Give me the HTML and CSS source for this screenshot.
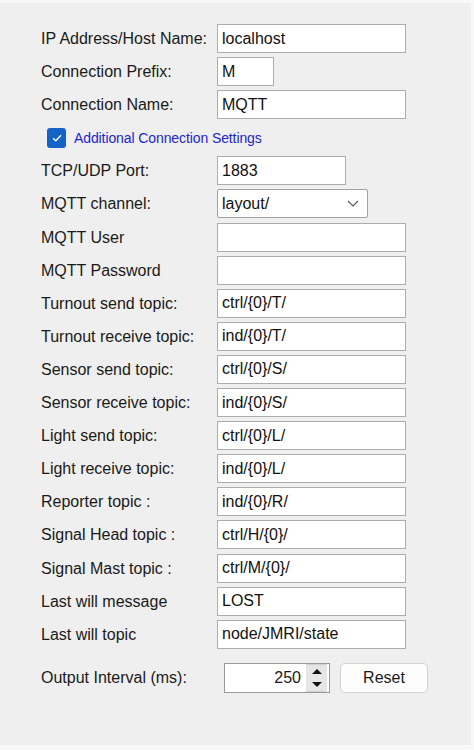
FILE: index.html
```html
<!DOCTYPE html>
<html lang="en">
<head>
  <meta charset="UTF-8">
  <title>MQTT Connection</title>
  <link rel="stylesheet" href="styles.css">
</head>
<body>
  <div class="panel">
    <div class="form-grid">
      <label>IP Address/Host Name:</label>
      <div class="field wide">localhost</div>
      <label>Connection Prefix:</label>
      <div class="field tiny">M</div>
      <label>Connection Name:</label>
      <div class="field wide">MQTT</div>

      <div class="check-row">
        <span class="checkbox">
          <svg width="10" height="8" viewBox="0 0 10 8"><path d="M1 4.2 L3.8 6.8 L9 1.2" fill="none" stroke="#fff" stroke-width="1.4"/></svg>
        </span>
        <span class="check-label">Additional Connection Settings</span>
      </div>

      <label>TCP/UDP Port:</label>
      <div class="field medium">1883</div>
      <label>MQTT channel:</label>
      <div class="field combo">
        <span>layout/</span>
        <svg width="12" height="7" viewBox="0 0 12 7"><path d="M1 1 L6 6 L11 1" fill="none" stroke="#555" stroke-width="1.1"/></svg>
      </div>
      <label>MQTT User</label>
      <div class="field wide"></div>
      <label>MQTT Password</label>
      <div class="field wide"></div>
      <label>Turnout send topic:</label>
      <div class="field wide">ctrl/{0}/T/</div>
      <label>Turnout receive topic:</label>
      <div class="field wide">ind/{0}/T/</div>
      <label>Sensor send topic:</label>
      <div class="field wide">ctrl/{0}/S/</div>
      <label>Sensor receive topic:</label>
      <div class="field wide">ind/{0}/S/</div>
      <label>Light send topic:</label>
      <div class="field wide">ctrl/{0}/L/</div>
      <label>Light receive topic:</label>
      <div class="field wide">ind/{0}/L/</div>
      <label>Reporter topic :</label>
      <div class="field wide">ind/{0}/R/</div>
      <label>Signal Head topic :</label>
      <div class="field wide">ctrl/H/{0}/</div>
      <label>Signal Mast topic :</label>
      <div class="field wide">ctrl/M/{0}/</div>
      <label>Last will message</label>
      <div class="field wide">LOST</div>
      <label>Last will topic</label>
      <div class="field wide">node/JMRI/state</div>
    </div>

    <div class="interval-row">
      <label>Output Interval (ms):</label>
      <div class="spinner">
        <span class="spin-value">250</span>
        <span class="spin-btns">
          <span class="spin-up"></span>
          <span class="spin-down"></span>
        </span>
      </div>
      <button class="reset-btn">Reset</button>
    </div>
  </div>
</body>
</html>
```

FILE: styles.css
```css
body {
  margin: 0;
  background-color: #f8f8f8;
  font-family: "Liberation Sans", Arial, sans-serif;
  font-size: 16px;
  color: #1a1a1a;
}
.panel {
  background-color: #efefef;
  height: 742px;
  margin: 3px 3px 0 0;
  padding: 21px 0 0 41px;
  box-sizing: border-box;
}
.form-grid {
  display: grid;
  grid-template-columns: 176px auto;
  grid-auto-rows: 29px;
  row-gap: 4.1px;
  align-items: center;
}
.form-grid label,
.interval-row label {
  white-space: nowrap;
  padding-top: 1px;
}
.field {
  height: 29px;
  box-sizing: border-box;
  background: #fff;
  border: 1px solid #adadad;
  padding: 0 4px;
  display: flex;
  align-items: center;
  color: #111;
}
.wide { width: 189px; }
.tiny { width: 57px; }
.medium { width: 129px; }
.combo {
  width: 151px;
  border-radius: 2px;
  border-color: #a2a2a2;
  justify-content: space-between;
  padding-right: 8px;
}
.check-row {
  grid-column: 1 / 3;
  display: flex;
  align-items: center;
  padding-left: 6px;
}
.checkbox {
  width: 19px;
  height: 20px;
  border-radius: 3px;
  background-color: #1463c6;
  display: flex;
  align-items: center;
  justify-content: center;
  margin-right: 8px;
}
.check-label {
  font-size: 14px;
  letter-spacing: -0.1px;
  color: #2323d6;
}
.interval-row {
  display: flex;
  align-items: center;
  margin-top: 14px;
}
.interval-row label {
  width: 183px;
}
.spinner {
  width: 106px;
  height: 30px;
  box-sizing: border-box;
  border: 1px solid #9a9a9a;
  background: #fff;
  display: flex;
  align-items: center;
}
.spin-value {
  flex: 1;
  text-align: right;
  padding-right: 5px;
}
.spin-btns {
  width: 21px;
  height: 26px;
  margin-right: 2px;
  background: #e6e6e6;
  display: flex;
  flex-direction: column;
  align-items: center;
  justify-content: space-around;
  border-top: 1px solid #d0d0d0;
  border-bottom: 1px solid #d0d0d0;
}
.spin-up,
.spin-down {
  width: 0;
  height: 0;
  border-left: 5px solid transparent;
  border-right: 5px solid transparent;
}
.spin-up { border-bottom: 5px solid #111; }
.spin-down { border-top: 5px solid #111; }
.reset-btn {
  margin-left: 10px;
  width: 88px;
  height: 30px;
  font-family: "Liberation Sans", Arial, sans-serif;
  font-size: 16px;
  color: #1a1a1a;
  background: #fdfdfd;
  border: 1px solid #d2d2d2;
  border-radius: 5px;
}
```
